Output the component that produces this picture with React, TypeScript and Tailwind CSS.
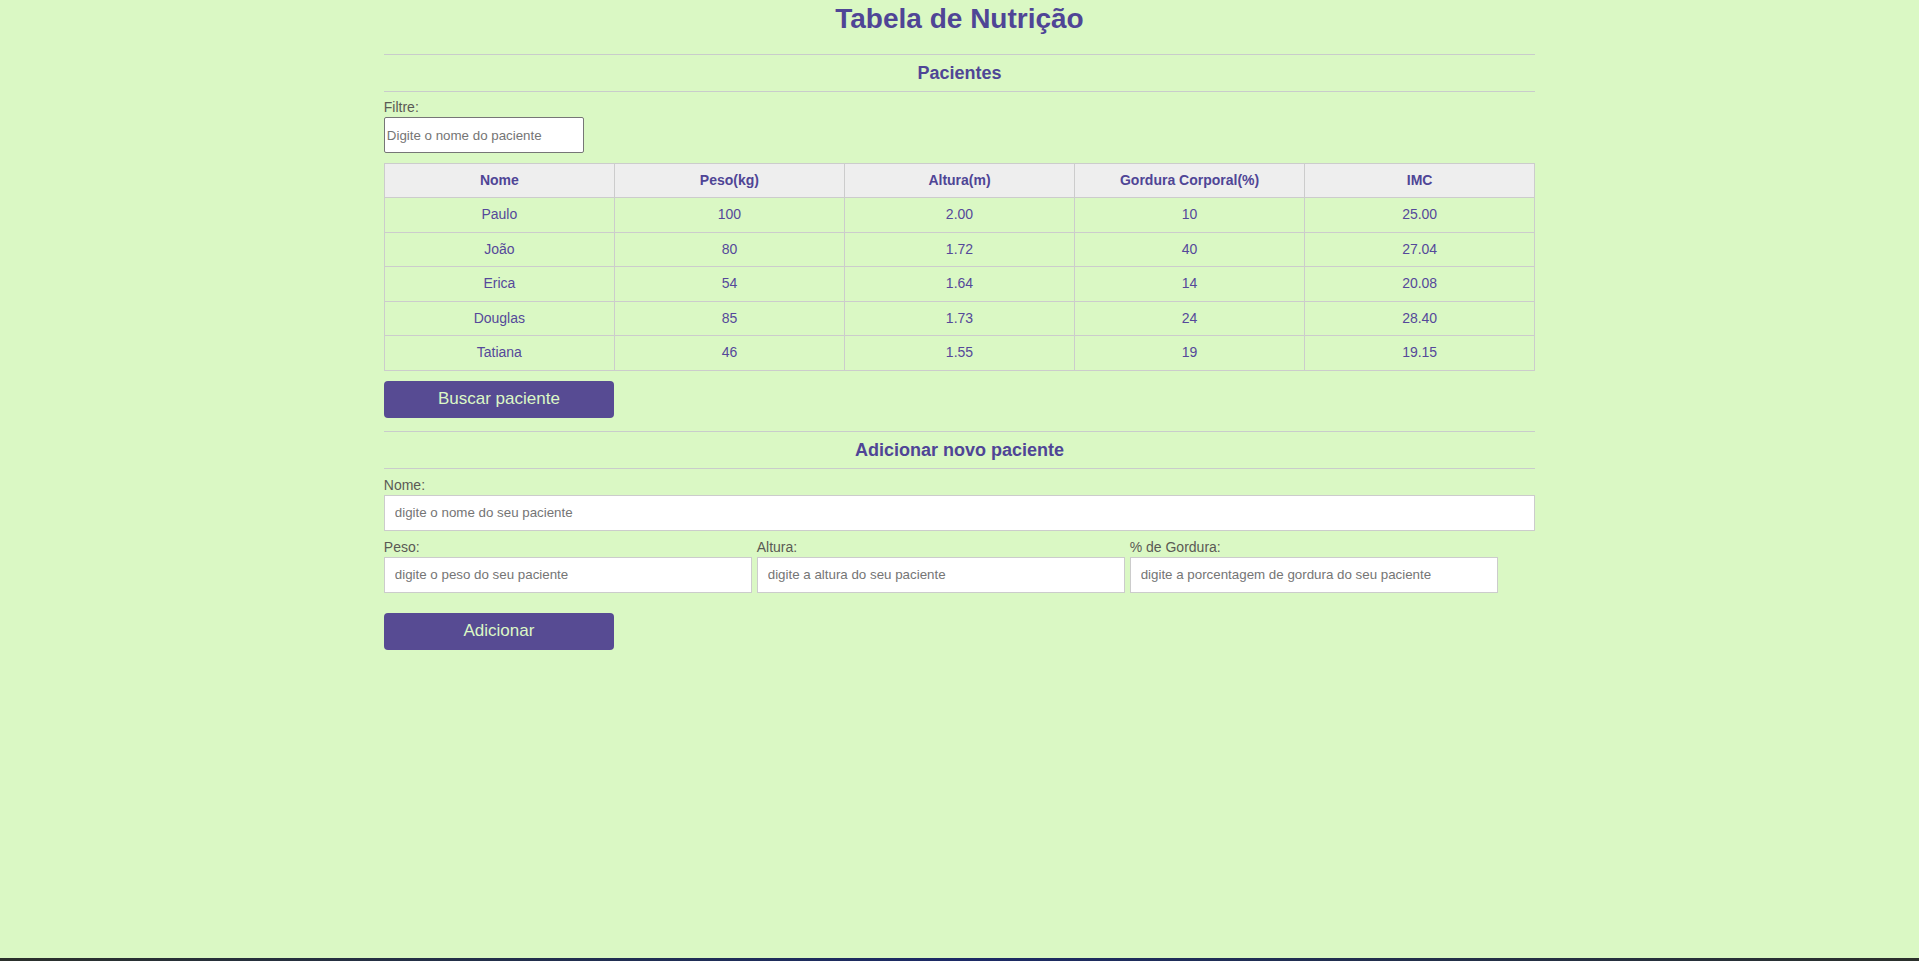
import React from 'react';

interface Paciente {
  nome: string;
  peso: number;
  altura: number;
  gordura: number;
}

const pacientes: Paciente[] = [
  { nome: 'Paulo', peso: 100, altura: 2.0, gordura: 10 },
  { nome: 'João', peso: 80, altura: 1.72, gordura: 40 },
  { nome: 'Erica', peso: 54, altura: 1.64, gordura: 14 },
  { nome: 'Douglas', peso: 85, altura: 1.73, gordura: 24 },
  { nome: 'Tatiana', peso: 46, altura: 1.55, gordura: 19 },
];

const calculaImc = (peso: number, altura: number) => (peso / (altura * altura)).toFixed(2);

function Titulo({ children }: { children: React.ReactNode }) {
  return (
    <div className="border-y border-[#c9cccb] pt-[8px] pb-[7px] text-center text-[18px] font-bold leading-[21px] text-[#4f4596]">
      {children}
    </div>
  );
}

function Campo({ label, placeholder, className }: { label: string; placeholder: string; className?: string }) {
  return (
    <div className={className}>
      <label className="block text-[14px] leading-[16px] text-[#5a5a55]">{label}</label>
      <input
        placeholder={placeholder}
        className="mt-[2px] block h-[36px] w-full border border-[#cccccc] bg-white pl-[10px] text-[13.33px] text-[#333] outline-none placeholder:text-[#757575]"
      />
    </div>
  );
}

export default function App() {
  return (
    <div
      className="flex min-h-screen flex-col bg-[#daf8c4]"
      style={{ fontFamily: '"Liberation Sans", Arial, sans-serif' }}
    >
      <main className="mx-auto w-[60%] flex-1">
        <h1 className="pt-[1px] text-center text-[28px] font-bold leading-[36px] text-[#4f4596]">Tabela de Nutrição</h1>

        {/* Pacientes */}
        <div className="mt-[17px]">
          <Titulo>Pacientes</Titulo>
        </div>

        <label className="mt-[7px] block text-[14px] leading-[16px] text-[#5a5a55]">Filtre:</label>
        <input
          placeholder="Digite o nome do paciente"
          className="mt-[2px] block h-[36px] w-[200px] rounded-[2px] border border-[#767676] bg-white px-[2px] text-[13.33px] outline-none placeholder:text-[#757575]"
        />

        <table className="mt-[10px] w-full table-fixed border-collapse text-center text-[14px]">
          <thead>
            <tr className="h-[34px] bg-[#eeeeee]">
              <th className="border border-[#cccccc] font-bold text-[#4f4596]">Nome</th>
              <th className="border border-[#cccccc] font-bold text-[#4f4596]">Peso(kg)</th>
              <th className="border border-[#cccccc] font-bold text-[#4f4596]">Altura(m)</th>
              <th className="border border-[#cccccc] font-bold text-[#4f4596]">Gordura Corporal(%)</th>
              <th className="border border-[#cccccc] font-bold text-[#4f4596]">IMC</th>
            </tr>
          </thead>
          <tbody>
            {pacientes.map((p) => (
              <tr key={p.nome} className="h-[34.5px] text-[#55489a]">
                <td className="border border-[#cccccc]">{p.nome}</td>
                <td className="border border-[#cccccc]">{p.peso}</td>
                <td className="border border-[#cccccc]">{p.altura.toFixed(2)}</td>
                <td className="border border-[#cccccc]">{p.gordura}</td>
                <td className="border border-[#cccccc]">{calculaImc(p.peso, p.altura)}</td>
              </tr>
            ))}
          </tbody>
        </table>

        <button className="mt-[10px] block h-[37px] w-[20%] rounded-[4px] bg-[#574b93] text-[17px] text-[#dcf8c6]">
          Buscar paciente
        </button>

        {/* Adicionar novo paciente */}
        <div className="mt-[13px]">
          <Titulo>Adicionar novo paciente</Titulo>
        </div>

        <Campo className="mt-[8px]" label="Nome:" placeholder="digite o nome do seu paciente" />

        <div className="mt-[8px] flex gap-[4.5px]">
          <Campo className="w-[32%]" label="Peso:" placeholder="digite o peso do seu paciente" />
          <Campo className="w-[32%]" label="Altura:" placeholder="digite a altura do seu paciente" />
          <Campo className="w-[32%]" label="% de Gordura:" placeholder="digite a porcentagem de gordura do seu paciente" />
        </div>

        <button className="mt-[20px] block h-[37px] w-[20%] rounded-[4px] bg-[#574b93] text-[17px] text-[#dcf8c6]">
          Adicionar
        </button>
      </main>

      {/* faixa escura no rodapé */}
      <div className="h-[3px] bg-gradient-to-r from-[#2b302b] via-[#1c2a66] to-[#2b302b]" />
    </div>
  );
}
